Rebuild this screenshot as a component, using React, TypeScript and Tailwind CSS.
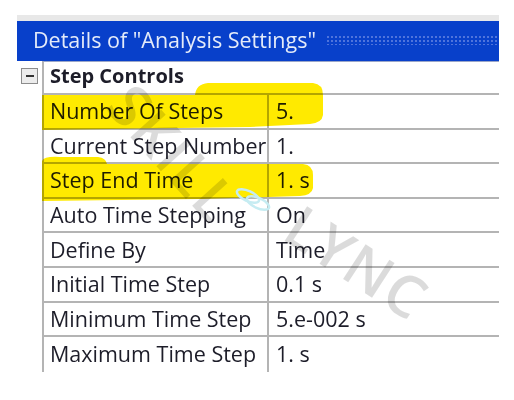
const ROWS: [string, string][] = [
  ["Number Of Steps", "5."],
  ["Current Step Number", "1."],
  ["Step End Time", "1. s"],
  ["Auto Time Stepping", "On"],
  ["Define By", "Time"],
  ["Initial Time Step", "0.1 s"],
  ["Minimum Time Step", "5.e-002 s"],
  ["Maximum Time Step", "1. s"],
];

function Row({ label, value, last }: { label: string; value: string; last?: boolean }) {
  return (
    <div
      className={
        "flex h-[34.6px] items-center " + (last ? "" : "border-b-2 border-[#b4b4b4]")
      }
    >
      <div className="flex h-full w-[225px] items-center border-r-2 border-[#b4b4b4] pl-[6px]">
        {label}
      </div>
      <div className="pl-[7px]">{value}</div>
    </div>
  );
}

// marker strokes and the faint watermark drawn over the grid
function Overlay() {
  return (
    <svg
      className="pointer-events-none absolute inset-0"
      width={514}
      height={400}
      viewBox="0 0 514 400"
    >
      <g style={{ mixBlendMode: "multiply" }} fill="#ffea00">
        <path d="M42 95 L195 95 Q196 84 208 83 L313 83 Q323 84 323 95 L323 115 Q322 123 310 124 L250 127 L42 130 Z" />
        <path d="M42 161 Q44 156 60 157 L98 157 Q106 158 107 164 L303 164 Q313 165 313 175 L313 188 Q312 195 300 196 L200 199 L42 201 Z" />
      </g>
      <g
        fill="#000"
        fillOpacity={0.14}
        style={{ fontFamily: "'Open Sans', sans-serif", fontSize: 58, fontWeight: 600 }}
      >
        <text x={104} y={108} letterSpacing={2} transform="rotate(48 104 108)">
          SKILL
        </text>
        <text x={280} y={238} letterSpacing={2} transform="rotate(33 280 238)">
          LYNC
        </text>
      </g>
      <g fill="none" stroke="#c6ecf2" strokeWidth={2.5}>
        <ellipse cx={248} cy={196} rx={12} ry={5} transform="rotate(25 248 196)" />
        <ellipse cx={258} cy={203} rx={12} ry={5} transform="rotate(25 258 203)" />
      </g>
    </svg>
  );
}

export default function App() {
  return (
    <div
      className="relative h-[400px] w-[514px] overflow-hidden bg-white text-[21.5px] font-medium text-[#1d1d29]"
      style={{ fontFamily: "'Open Sans', 'Noto Sans', sans-serif" }}
    >
      <div className="ml-[17px] w-[482px] pt-[15px]">
        <div className="h-[6px] bg-[#e8e8e8]" />
        <div className="flex h-[40px] items-center bg-[#0840ca] pb-[3px] pl-4">
          <span className="text-[21.5px] leading-none text-[#e4ebf9]">
            Details of "Analysis Settings"
          </span>
          <div className="ml-[10px] h-[10px] flex-1 bg-[radial-gradient(circle,#4f74dc_0.9px,transparent_1.3px)] bg-[length:4px_4px]" />
        </div>

        <div className="flex">
          <div className="w-[25px] pl-[4px] pt-[7px]">
            <div className="flex h-[16px] w-[17px] items-center justify-center border border-[#8c8c8c] bg-[#ececec]">
              <div className="h-[2px] w-[8px] bg-[#333]" />
            </div>
          </div>
          <div className="flex-1 border-l-2 border-t border-[#b4b4b4] border-t-[#9aa6c8]">
            <div className="flex h-[33px] items-center border-b-2 border-[#b4b4b4] pb-[4px] pl-[6px] text-[20px] font-bold">
              Step Controls
            </div>
            {ROWS.map(([label, value], i) => (
              <Row key={label} label={label} value={value} last={i === ROWS.length - 1} />
            ))}
          </div>
        </div>
      </div>
      <Overlay />
    </div>
  );
}
